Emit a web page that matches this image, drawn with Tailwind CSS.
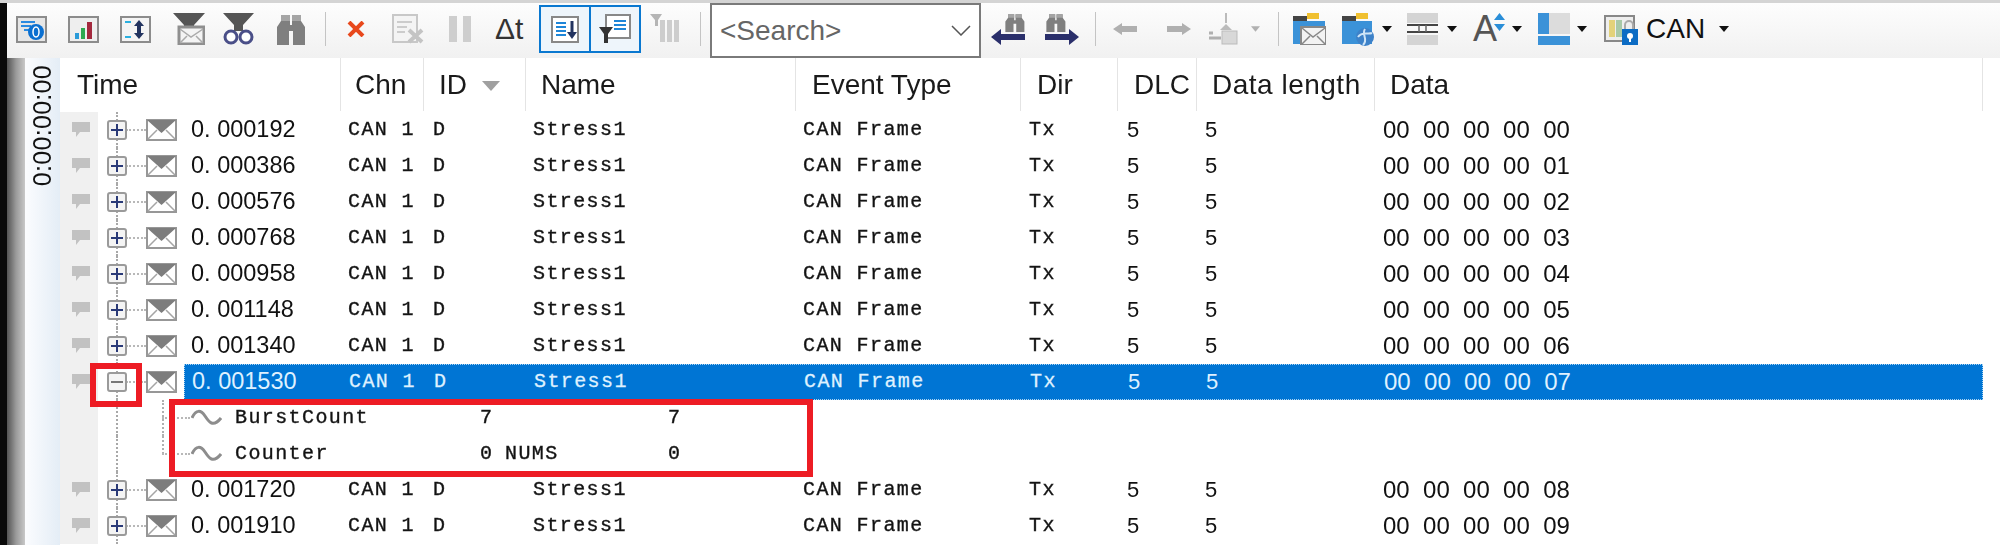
<!DOCTYPE html>
<html lang="en">
<head>
  <meta charset="UTF-8">
  <title>CANoe Trace</title>
  <script src="https://cdn.jsdelivr.net/npm/@tailwindcss/browser@4"></script>
</head>
<body class="bg-white overflow-hidden">
  <svg width="0" height="0" class="absolute">
    <symbol id="mail" viewBox="0 0 31 22">
      <rect x="1" y="1" width="29" height="20" fill="#fff" stroke="#979797" stroke-width="2"/>
      <path d="M1 1h29L15.500 14z" fill="#7d7d7d"/>
      <path d="M2 20l9-9M29 20l-9-9" stroke="#a5a5a5" stroke-width="1.500"/>
    </symbol>
    <symbol id="bubble" viewBox="0 0 18 16">
      <path d="M0 0h18v10H8l-4 5v-5H0z" fill="#c2c2c2"/>
    </symbol>
    <symbol id="wave" viewBox="0 0 31 18">
      <path d="M1 9C5 0 10 1 14 7s8 12 16 2" fill="none" stroke="#8d8d8d" stroke-width="3"/>
    </symbol>
    <symbol id="caret" viewBox="0 0 10 6">
      <path d="M0 0h10L5 6z" fill="#111"/>
    </symbol>
    <symbol id="binoc" viewBox="0 0 32 32">
      <path d="M2 32V14l4-6V2h9v10h2V2h9v6l4 6v18H18V18h-4v14z" fill="#7f7f7f"/>
      <path d="M6 2h9v6H6zM17 2h9v6h-9z" fill="#a5a5a5"/>
    </symbol>
  </svg>

  <div class="relative w-[2000px] h-[545px] overflow-hidden blur-[0.5px] font-['Liberation_Sans',sans-serif] text-[#111]">
    <div class="h-[3px] bg-[#d4d4d4]"></div>
    <div class="flex h-[542px]">
      <div class="w-[7px] bg-[#0a0a0a]"></div>
      <div class="flex-1 min-w-0">
        <!-- toolbar -->
        <div class="flex items-center h-[55px] pb-[3px] bg-gradient-to-b from-[#fdfdfd] to-[#f1f1f1]">
          <svg class="ml-[9px]" width="31" height="27" viewBox="0 0 31 27"><rect x="1" y="1" width="29" height="25" fill="#e6e6e6" stroke="#8c8c8c" stroke-width="2"/><path d="M5 6h14M5 10h10M8 14h8" stroke="#2a8ae0" stroke-width="2"/><circle cx="20" cy="16" r="8" fill="#0a6fd0"/><ellipse cx="20" cy="16" rx="3" ry="5" fill="none" stroke="#fff" stroke-width="1.500"/></svg>
          <svg class="ml-[21px]" width="31" height="27" viewBox="0 0 31 27"><rect x="1" y="1" width="29" height="25" fill="#eee" stroke="#8c8c8c" stroke-width="2"/><rect x="7" y="17" width="4" height="6" fill="#2a9ad8"/><rect x="13" y="12" width="4" height="11" fill="#2ea84f"/><rect x="19" y="6" width="5" height="17" fill="#a3283d"/></svg>
          <svg class="ml-[21px]" width="31" height="27" viewBox="0 0 31 27"><rect x="1" y="1" width="29" height="25" fill="#f4f4f4" stroke="#8c8c8c" stroke-width="2"/><path d="M5 6h6M5 21h6" stroke="#2ab0e0" stroke-width="2"/><path d="M19 4l-5 6h10zM19 23l-5-6h10z" fill="#22335f"/><rect x="17" y="9" width="4" height="9" fill="#22335f"/></svg>
          <svg class="ml-[22px]" width="32" height="32" viewBox="0 0 32 32"><path d="M0 0h32L21 12v2H11v-2z" fill="#555"/><rect x="6" y="14" width="25" height="17" fill="#f4f4f4" stroke="#8f8f8f" stroke-width="3"/><path d="M7 16l11 8 12-8M7 30l7-7M30 30l-7-7" fill="none" stroke="#aaa" stroke-width="1.500"/></svg>
          <svg class="ml-[18px]" width="31" height="32" viewBox="0 0 31 32"><path d="M0 0h31L20 12v6h-9v-6z" fill="#555"/><circle cx="8" cy="24" r="6" fill="#fff" stroke="#4a4f88" stroke-width="3"/><circle cx="23" cy="24" r="6" fill="#fff" stroke="#4a4f88" stroke-width="3"/></svg>
          <svg class="ml-[21px]" width="32" height="32"><use href="#binoc"/></svg>
          <div class="ml-[18px] w-px h-[34px] bg-[#c4c4c4]"></div>
          <svg class="ml-[21px]" width="18" height="16" viewBox="0 0 18 16"><path d="M2 1l14 14M16 1L2 15" stroke="#e8481c" stroke-width="4"/></svg>
          <svg class="ml-[27px]" width="33" height="30" viewBox="0 0 33 30"><rect x="1" y="1" width="24" height="27" fill="#f4f4f4" stroke="#c8c8c8" stroke-width="2"/><path d="M5 8h15M5 13h10M5 18h8" stroke="#ccc" stroke-width="2"/><path d="M17 16l13 12M30 16L17 28" stroke="#c4c4c4" stroke-width="4"/></svg>
          <div class="ml-[24px] flex gap-[6px] h-[26px]"><div class="w-[8px] bg-[#cecece]"></div><div class="w-[8px] bg-[#cecece]"></div></div>
          <div class="ml-[24px] w-[30px] text-[30px] leading-none text-[#333] whitespace-nowrap">Δt</div>
          <div class="ml-[14px] flex h-[48px] w-[102px] border-2 border-[#0a78d0] bg-[#eef5fb]">
            <div class="w-[50px] flex items-center justify-center border-r-2 border-[#0a78d0]">
              <svg width="28" height="27" viewBox="0 0 28 27"><rect x="1" y="1" width="26" height="25" fill="#fff" stroke="#888" stroke-width="2"/><path d="M5 7h10M5 11h10M5 15h10M5 19h10" stroke="#1f86d8" stroke-width="2"/><path d="M21 5v13" stroke="#22335f" stroke-width="3"/><path d="M16 16h10l-5 7z" fill="#22335f"/></svg>
            </div>
            <div class="flex-1 flex items-center justify-center">
              <svg width="32" height="30" viewBox="0 0 32 30"><rect x="7" y="1" width="24" height="23" fill="#fff" stroke="#888" stroke-width="2"/><path d="M15 7h12M15 11h12M15 15h12" stroke="#1f86d8" stroke-width="2"/><path d="M0 13h14l-5 7v9h-4v-9z" fill="#333"/></svg>
            </div>
          </div>
          <svg class="ml-[9px]" width="31" height="30" viewBox="0 0 31 30"><path d="M0 0h12l-4 6v6H5V6z" fill="#b5b5b5"/><rect x="10" y="6" width="5" height="22" fill="#cdcdcd"/><rect x="17" y="6" width="5" height="22" fill="#cdcdcd"/><rect x="24" y="6" width="5" height="22" fill="#cdcdcd"/></svg>
          <div class="ml-[19px] w-px h-[34px] bg-[#c4c4c4]"></div>
          <div class="ml-[9px] self-start flex items-center w-[271px] h-[55px] border-2 border-[#7a7a7a] bg-white pl-[8px] pr-[8px] text-[#666] shrink-0">
            <span class="flex-1 text-[28px] leading-none">&lt;Search&gt;</span>
            <svg width="20" height="11" viewBox="0 0 20 11"><path d="M1 1l9 9 9-9" fill="none" stroke="#555" stroke-width="1.500"/></svg>
          </div>
          <svg class="ml-[10px]" width="35" height="32" viewBox="0 0 35 32"><g transform="translate(13 0) scale(.68 .6)"><use href="#binoc" width="32" height="32"/></g><path d="M0 24l10-8v5h24v6H10v5z" fill="#2a2f6b"/></svg>
          <svg class="ml-[19px]" width="34" height="32" viewBox="0 0 34 32"><g transform="scale(.68 .6)"><use href="#binoc" width="32" height="32"/></g><path d="M34 24l-10-8v5H0v6h24v5z" fill="#2a2f6b"/></svg>
          <div class="ml-[16px] w-px h-[34px] bg-[#c4c4c4]"></div>
          <svg class="ml-[17px]" width="24" height="12" viewBox="0 0 24 12"><path d="M0 6l9-6v3h15v6H9v3z" fill="#b0b0b0"/></svg>
          <svg class="ml-[30px]" width="24" height="12" viewBox="0 0 24 12"><path d="M24 6l-9-6v3H0v6h15v3z" fill="#b0b0b0"/></svg>
          <svg class="ml-[18px]" width="29" height="32" viewBox="0 0 29 32"><path d="M17 0v10" stroke="#bbb" stroke-width="2"/><path d="M17 11l-6 6h12z" fill="#bbb"/><rect x="13" y="18" width="15" height="13" fill="#d8d8d8" stroke="#bbb"/><path d="M0 25h12M0 20h4" stroke="#b0b0b0" stroke-width="3"/></svg>
          <svg class="ml-[13px]" width="9" height="6"><use href="#caret" opacity=".3"/></svg>
          <div class="ml-[18px] w-px h-[34px] bg-[#c4c4c4]"></div>
          <svg class="ml-[14px]" width="33" height="32" viewBox="0 0 33 32"><rect x="0" y="3" width="14" height="6" fill="#444"/><rect x="14" y="0" width="12" height="6" fill="#f0c030"/><rect x="0" y="8" width="32" height="23" fill="#3b92d8"/><rect x="8" y="14" width="25" height="18" fill="#f3f3f3" stroke="#888" stroke-width="2"/><path d="M9 15l11 9 12-9M9 31l8-8M32 31l-8-8" fill="none" stroke="#888" stroke-width="1.500"/></svg>
          <svg class="ml-[16px]" width="34" height="34" viewBox="0 0 34 34"><rect x="0" y="4" width="14" height="6" fill="#444"/><rect x="14" y="1" width="12" height="6" fill="#f0c030"/><rect x="0" y="9" width="30" height="23" fill="#3b92d8"/><circle cx="23" cy="25" r="9" fill="#3d82c9"/><path d="M16 25c4-6 10-2 14-4M23 17c-4 6 4 10-2 16" stroke="#cfe5f7" stroke-width="2" fill="none"/></svg>
          <svg class="ml-[6px]" width="10" height="6"><use href="#caret"/></svg>
          <svg class="ml-[15px]" width="31" height="32" viewBox="0 0 31 32"><rect width="31" height="10" fill="#d4d4d4"/><rect y="22" width="31" height="10" fill="#d4d4d4"/><path d="M0 12h31M0 19h31" stroke="#444" stroke-width="2"/><path d="M12 12v7M19 12v7" stroke="#666" stroke-width="1.500"/></svg>
          <svg class="ml-[9px]" width="10" height="6"><use href="#caret"/></svg>
          <div class="ml-[16px] w-[32px] h-[32px] relative">
            <span class="block w-[26px] text-[36px] leading-[32px] text-[#555]">A</span>
            <svg class="absolute top-0 right-0" width="11" height="18" viewBox="0 0 11 18"><path d="M5.500 0L11 7H0zM5.500 18L0 11h11z" fill="#2a8ed8"/></svg>
          </div>
          <svg class="ml-[7px]" width="10" height="6"><use href="#caret"/></svg>
          <svg class="ml-[16px]" width="32" height="32" viewBox="0 0 32 32"><rect x="11" width="21" height="21" fill="#dcdcdc"/><rect width="11" height="21" fill="#3b92d8"/><rect y="23" width="32" height="9" fill="#3b92d8"/></svg>
          <svg class="ml-[7px]" width="10" height="6"><use href="#caret"/></svg>
          <svg class="ml-[17px]" width="34" height="32" viewBox="0 0 34 32"><rect x="1" y="3" width="29" height="25" fill="#eee" stroke="#888" stroke-width="2"/><rect x="5" y="7" width="6" height="17" fill="#e3d27a"/><rect x="12" y="7" width="6" height="17" fill="#a8c9a8"/><path d="M21 17v-5a4 4 0 018 0v5" fill="none" stroke="#aaa" stroke-width="2"/><rect x="18" y="16" width="16" height="16" fill="#0c6cc4"/><circle cx="26" cy="23" r="3" fill="#fff"/><rect x="25" y="24" width="2" height="5" fill="#fff"/></svg>
          <span class="ml-[8px] w-[56px] text-[28px] leading-none">CAN</span>
          <svg class="ml-[17px]" width="10" height="6"><use href="#caret"/></svg>
        </div>

        <div class="flex h-[487px]">
          <!-- time rail -->
          <div class="w-[18px] bg-gradient-to-r from-[#555] via-[#9a9a9a] to-[#c8c8c8]"></div>
          <div class="w-[35px] bg-gradient-to-r from-[#fbfcfe] to-[#e4edf6] flex justify-center pt-[7px]">
            <span class="[writing-mode:vertical-rl] rotate-180 self-start text-[25px] leading-none tracking-[0.3px]">0:00:00:00</span>
          </div>
          <div class="flex-1 min-w-0">
            <!-- header -->
            <div class="flex h-[54px] items-center text-[28px] leading-none pb-[1px] text-[#1a1a1a]">
              <div class="h-full flex items-center w-[281px] pl-[17px] border-r border-[#e4e4e4]">Time</div>
              <div class="h-full flex items-center w-[83px] pl-[14px] border-r border-[#e4e4e4]">Chn</div>
              <div class="h-full flex items-center w-[102px] pl-[15px] border-r border-[#e4e4e4]">ID
                <svg class="ml-[15px] mt-[2px]" width="18" height="10" viewBox="0 0 18 10"><path d="M0 0h18L9 10z" fill="#a0a0a0"/></svg>
              </div>
              <div class="h-full flex items-center w-[270px] pl-[15px] border-r border-[#e4e4e4]">Name</div>
              <div class="h-full flex items-center w-[225px] pl-[16px] border-r border-[#e4e4e4]">Event Type</div>
              <div class="h-full flex items-center w-[97px] pl-[16px] border-r border-[#e4e4e4]">Dir</div>
              <div class="h-full flex items-center w-[79px] pl-[16px] border-r border-[#e4e4e4]">DLC</div>
              <div class="h-full flex items-center w-[178px] pl-[15px] border-r border-[#e4e4e4] whitespace-nowrap tracking-[0.5px]">Data length</div>
              <div class="h-full flex items-center w-[608px] pl-[15px] border-r border-[#e4e4e4]">Data</div>
            </div>
            <div id="rows"></div>
          </div>
        </div>
      </div>
    </div>

    <!-- annotation boxes -->
    <div class="absolute left-[90px] top-[363px] w-[52px] h-[44px] border-[6px] border-[#ed1c24]"></div>
    <div class="absolute left-[169px] top-[399px] w-[644px] h-[78px] border-[6px] border-[#ed1c24]"></div>
  </div>

  <script>
    const times = ['000192', '000386', '000576', '000768', '000958', '001148', '001340', '001530', '001720', '001910'];
    const mono = "font-['Liberation_Mono',monospace] text-[20px] tracking-[1.400px] [-webkit-text-stroke:0.4px_#222]";
    const monoSel = "font-['Liberation_Mono',monospace] text-[20px] tracking-[1.400px] [-webkit-text-stroke:0.3px_#dff1ff]";

    function frameRow(t, i) {
      const selected = i === 7;
      const m = selected ? monoSel : mono;
      const cells = `
        <div class="w-[164px] pl-[7px] text-[23.500px]">0. ${t}</div>
        <div class="w-[85px] ${m}">CAN 1</div>
        <div class="w-[100px] ${m}">D</div>
        <div class="w-[270px] ${m}">Stress1</div>
        <div class="w-[226px] ${m}">CAN Frame</div>
        <div class="w-[98px] ${m}">Tx</div>
        <div class="w-[78px] text-[22px]">5</div>
        <div class="w-[178px] text-[22px]">5</div>
        <div class="text-[24px] whitespace-pre">00  00  00  00  0${i}</div>`;
      return `
        <div class="relative flex items-center h-[36px] leading-none">
          <div class="w-[38px] h-full bg-[#f0f0f0] flex items-center pl-[12px]">
            <svg width="18" height="16"><use href="#bubble"/></svg>
          </div>
          <div class="relative w-[48px] h-full flex items-center">
            <div class="absolute left-[18px] top-0 h-[36px] border-l-2 border-dotted border-[#a8a8a8]"></div>
            <div class="absolute left-[28px] w-[20px] border-t-2 border-dotted border-[#b8b8b8]"></div>
            <div class="relative ml-[9px] w-[20px] h-[20px] rounded-[3px] border-2 border-[#9a9a9a] bg-[#f4f4f4] flex items-center justify-center">
              <div class="absolute w-[12px] h-[2px] ${selected ? 'bg-[#777]' : 'bg-[#2a3a78]'}"></div>
              ${selected ? '' : '<div class="absolute w-[2px] h-[12px] bg-[#2a3a78]"></div>'}
            </div>
          </div>
          <div class="w-[38px] h-full flex items-center">
            <svg width="31" height="22"><use href="#mail"/></svg>
          </div>
          ${selected
            ? `<div class="flex items-center w-[1799px] h-full bg-[#0075d4] border border-dotted border-[#a9d3f2] text-[#dff1ff]">${cells}</div>`
            : `<div class="flex items-center h-full">${cells}</div>`}
        </div>`;
    }

    function signalRow(name, value, unit, raw, last) {
      return `
        <div class="relative flex items-center h-[36px] leading-none">
          <div class="w-[38px] h-full bg-[#f0f0f0]"></div>
          <div class="relative w-[48px] h-full">
            <div class="absolute left-[18px] top-0 h-[36px] border-l-2 border-dotted border-[#a8a8a8]"></div>
          </div>
          <div class="relative h-full w-[89px] flex items-center">
            <div class="absolute left-[16px] top-0 ${last ? 'h-[18px]' : 'h-[36px]'} border-l-2 border-dotted border-[#b0b0b0]"></div>
            <div class="absolute left-[16px] w-[28px] border-t-2 border-dotted border-[#b8b8b8]"></div>
            <svg class="absolute left-[45px]" width="31" height="18"><use href="#wave"/></svg>
          </div>
          <div class="w-[245px] ${mono}">${name}</div>
          <div class="w-[25px] ${mono}">${value}</div>
          <div class="w-[163px] ${mono} tracking-[0px]">${unit}</div>
          <div class="${mono}">${raw}</div>
        </div>`;
    }

    const html = times.map(frameRow);
    html.splice(8, 0, signalRow('BurstCount', '7', '', '7', false), signalRow('Counter', '0', 'NUMS', '0', true));
    document.getElementById('rows').innerHTML = html.join('');
  </script>
</body>
</html>
